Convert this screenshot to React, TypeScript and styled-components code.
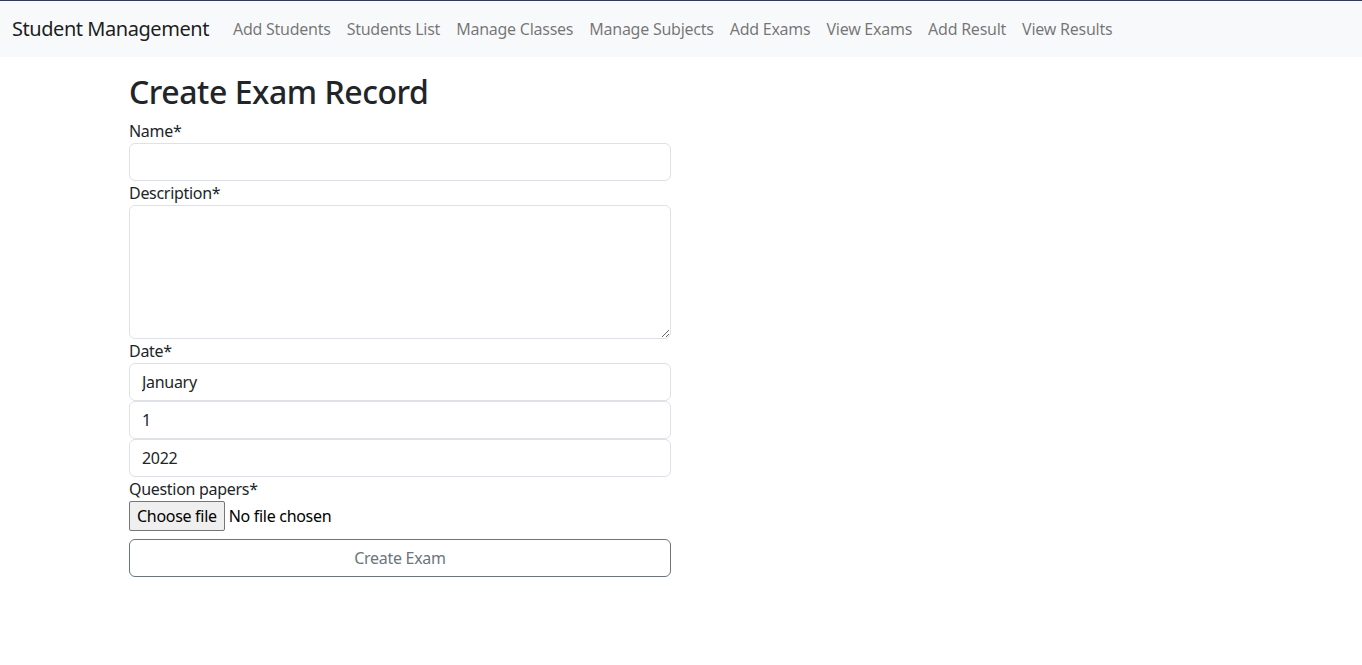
import React from 'react';
import styled, { createGlobalStyle } from 'styled-components';

const GlobalStyles = createGlobalStyle`
  *, *::before, *::after { box-sizing: border-box; }
  body {
    margin: 0;
    font-family: 'Noto Sans', 'Open Sans', sans-serif;
    font-size: 16px;
    line-height: 1.5;
    letter-spacing: -0.3px;
    color: #212529;
    background: #fff;
  }
`;

const NavBar = styled.nav`
  display: flex;
  align-items: center;
  height: 57px;
  padding: 0 12px;
  background: #f8f9fa;
  border-top: 1px solid #343a5c;
`;

const Brand = styled.a`
  font-size: 20px;
  letter-spacing: -0.45px;
  color: rgba(0, 0, 0, 0.9);
  margin-right: 16px;
  text-decoration: none;
  white-space: nowrap;
`;

const NavLinks = styled.div`
  display: flex;
`;

const NavLink = styled.a`
  padding: 8px;
  color: rgba(0, 0, 0, 0.55);
  letter-spacing: -0.25px;
  text-decoration: none;
  white-space: nowrap;
`;

const Container = styled.main`
  width: 1104px;
  margin: 0 auto;
  padding-top: 16px;
`;

const Form = styled.form`
  width: 542px;
  display: flex;
  flex-direction: column;
`;

const Title = styled.h2`
  margin: 0 0 8px;
  font-size: 32px;
  font-weight: 500;
  line-height: 1.2;
  letter-spacing: -0.45px;
`;

const Label = styled.label`
  display: block;
  line-height: 24px;
`;

const Field = styled.input`
  display: block;
  width: 100%;
  height: 38px;
  padding: 6px 12px;
  font: inherit;
  letter-spacing: inherit;
  color: #212529;
  border: 1px solid #dee2e6;
  border-radius: 6px;
  background: #fff;
  outline: none;
`;

const TextArea = styled.textarea`
  display: block;
  width: 100%;
  height: 134px;
  padding: 6px 12px;
  font: inherit;
  border: 1px solid #dee2e6;
  border-radius: 6px;
  outline: none;
  resize: vertical;
`;

const FileRow = styled.label`
  display: flex;
  align-items: center;
  gap: 4px;
  height: 30px;
  cursor: pointer;
  input {
    display: none;
  }
`;

const FileButton = styled.span`
  display: inline-flex;
  align-items: center;
  height: 30px;
  padding: 0 7px;
  background: #efefef;
  border: 1px solid #767676;
  border-radius: 2px;
  color: #000;
`;

const FileStatus = styled.span`
  color: #000;
`;

const SubmitButton = styled.button`
  margin-top: 8px;
  width: 100%;
  height: 38px;
  font: inherit;
  letter-spacing: inherit;
  color: #6c757d;
  background: transparent;
  border: 1px solid #6c757d;
  border-radius: 6px;
`;

const links = [
  'Add Students',
  'Students List',
  'Manage Classes',
  'Manage Subjects',
  'Add Exams',
  'View Exams',
  'Add Result',
  'View Results',
];

export default function App() {
  return (
    <>
      <GlobalStyles />
      <NavBar>
        <Brand href="#">Student Management</Brand>
        <NavLinks>
          {links.map((l) => (
            <NavLink key={l} href="#">
              {l}
            </NavLink>
          ))}
        </NavLinks>
      </NavBar>
      <Container>
        <Form onSubmit={(e) => e.preventDefault()}>
          <Title>Create Exam Record</Title>
          <Label>Name*</Label>
          <Field type="text" />
          <Label>Description*</Label>
          <TextArea />
          <Label>Date*</Label>
          <Field type="text" defaultValue="January" />
          <Field type="text" defaultValue="1" />
          <Field type="text" defaultValue="2022" />
          <Label>Question papers*</Label>
          <FileRow>
            <input type="file" />
            <FileButton>Choose file</FileButton>
            <FileStatus>No file chosen</FileStatus>
          </FileRow>
          <SubmitButton type="submit">Create Exam</SubmitButton>
        </Form>
      </Container>
    </>
  );
}
